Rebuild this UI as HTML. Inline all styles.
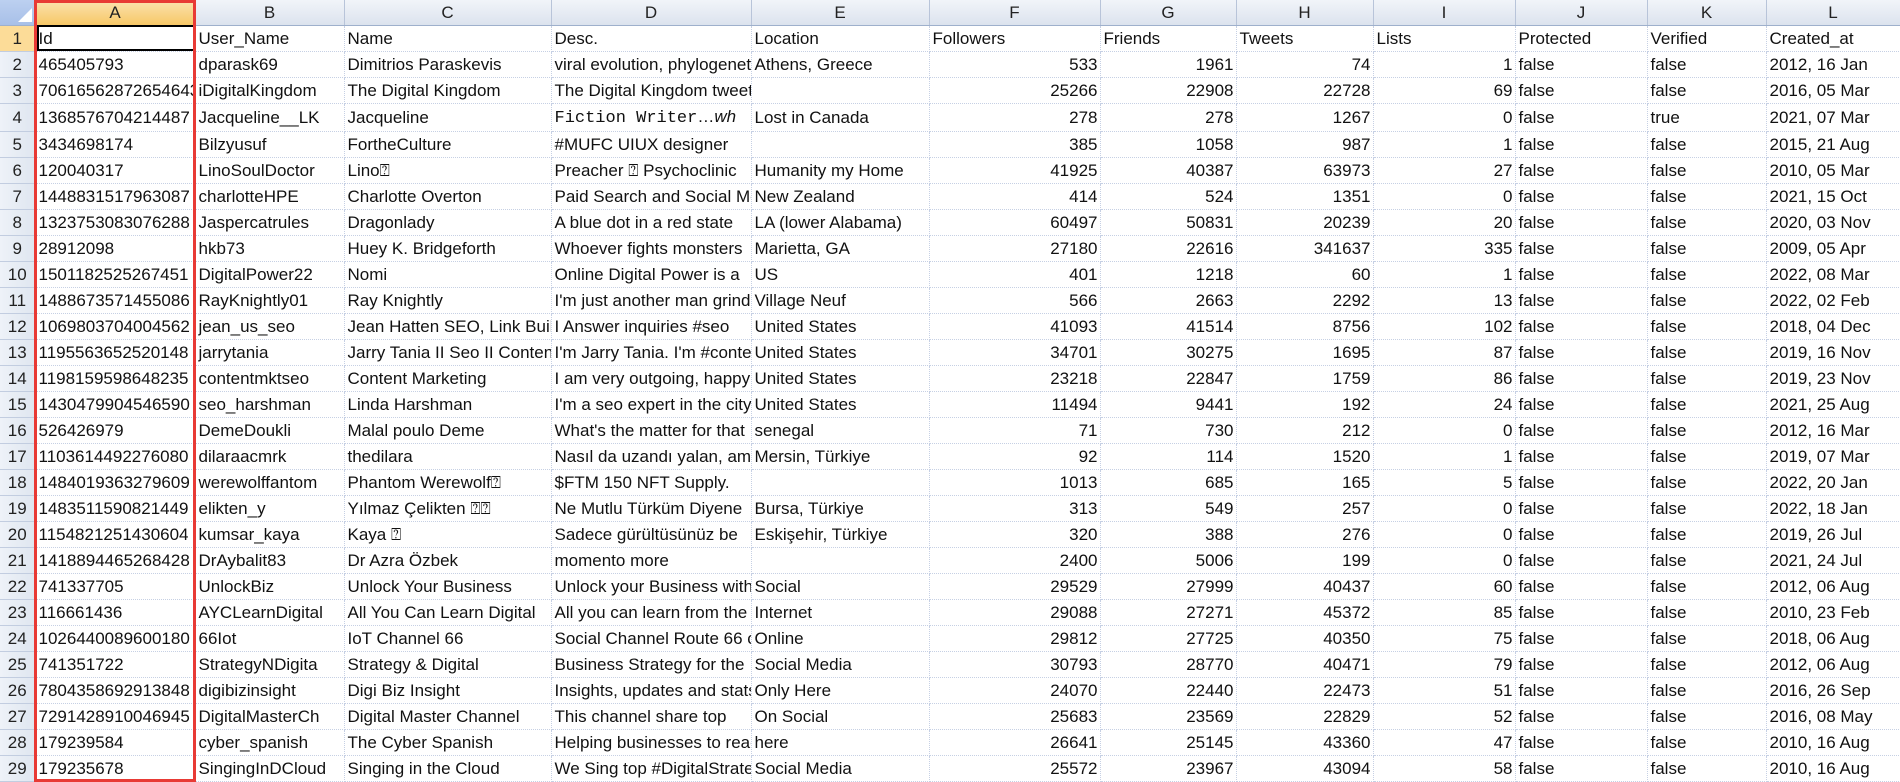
<!DOCTYPE html>
<html><head><meta charset="utf-8"><style>
html,body{margin:0;padding:0;width:1900px;height:782px;overflow:hidden;background:#fff}
table{border-collapse:collapse;table-layout:fixed;width:1900px;position:absolute;left:0;top:0;font-family:"Liberation Sans","DejaVu Sans",sans-serif;font-size:17px;color:#111}
td{height:25px;padding:0 0 0 3px;white-space:nowrap;overflow:hidden;border-right:1px dotted #c6d0e4;border-bottom:1px dotted #c6d0e4;line-height:25px;box-sizing:border-box}
tr.h td{height:25px;background:linear-gradient(#f1f4f9,#dce3ee);text-align:center;color:#222;border-right:1px solid #b8c4d9;border-bottom:1px solid #9eb0cc;padding:0}
tr.h td.sel{background:linear-gradient(#fbe3b1,#f7c867);}
td.rh{background:linear-gradient(90deg,#eef2f8,#dfe6f0);text-align:center;border-right:1px solid #9eb0cc;border-bottom:1px solid #c2cde0;padding:0;color:#222}
td.rh.sel{background:#fcdc98}
td.n{text-align:right;padding:0 2px 0 0}
.red{position:absolute;left:34px;top:0;width:156px;height:776px;border:3px solid #e83a35;box-sizing:content-box;pointer-events:none}
.a1{position:absolute;left:37px;top:25px;width:158px;height:26px;border:2px solid #000;box-sizing:border-box}
.corner{position:absolute;left:0;top:0;width:35px;height:25px;background:linear-gradient(#bcd0f0,#a8c0e8)}
.corner:after{content:"";position:absolute;right:3px;bottom:3px;border-left:14px solid transparent;border-bottom:14px solid #fff}
</style></head><body>
<table>
<colgroup><col style="width:35px"><col style="width:160px"><col style="width:149px"><col style="width:207px"><col style="width:200px"><col style="width:178px"><col style="width:171px"><col style="width:136px"><col style="width:137px"><col style="width:142px"><col style="width:132px"><col style="width:119px"><col style="width:134px"></colgroup>
<tr class="h"><td></td><td class="sel">A</td><td>B</td><td>C</td><td>D</td><td>E</td><td>F</td><td>G</td><td>H</td><td>I</td><td>J</td><td>K</td><td>L</td></tr>
<tr><td class="rh sel">1</td><td>Id</td><td>User_Name</td><td>Name</td><td>Desc.</td><td>Location</td><td>Followers</td><td>Friends</td><td>Tweets</td><td>Lists</td><td>Protected</td><td>Verified</td><td>Created_at</td></tr>
<tr><td class="rh">2</td><td>465405793</td><td>dparask69</td><td>Dimitrios Paraskevis</td><td>viral evolution, phylogenetics</td><td>Athens, Greece</td><td class="n">533</td><td class="n">1961</td><td class="n">74</td><td class="n">1</td><td>false</td><td>false</td><td>2012, 16 Jan</td></tr>
<tr><td class="rh">3</td><td>706165628726546432</td><td>iDigitalKingdom</td><td>The Digital Kingdom</td><td>The Digital Kingdom tweets</td><td></td><td class="n">25266</td><td class="n">22908</td><td class="n">22728</td><td class="n">69</td><td>false</td><td>false</td><td>2016, 05 Mar</td></tr>
<tr><td class="rh">4</td><td>1368576704214487</td><td>Jacqueline__LK</td><td>Jacqueline</td><td><span style="font-family:'Liberation Mono',monospace">Fiction Writer</span>…<i>wh</i></td><td>Lost in Canada</td><td class="n">278</td><td class="n">278</td><td class="n">1267</td><td class="n">0</td><td>false</td><td>true</td><td>2021, 07 Mar</td></tr>
<tr><td class="rh">5</td><td>3434698174</td><td>Bilzyusuf</td><td>FortheCulture</td><td>#MUFC UIUX designer</td><td></td><td class="n">385</td><td class="n">1058</td><td class="n">987</td><td class="n">1</td><td>false</td><td>false</td><td>2015, 21 Aug</td></tr>
<tr><td class="rh">6</td><td>120040317</td><td>LinoSoulDoctor</td><td>Lino⍰</td><td>Preacher ⍰ Psychoclinic</td><td>Humanity my Home</td><td class="n">41925</td><td class="n">40387</td><td class="n">63973</td><td class="n">27</td><td>false</td><td>false</td><td>2010, 05 Mar</td></tr>
<tr><td class="rh">7</td><td>1448831517963087</td><td>charlotteHPE</td><td>Charlotte Overton</td><td>Paid Search and Social Media</td><td>New Zealand</td><td class="n">414</td><td class="n">524</td><td class="n">1351</td><td class="n">0</td><td>false</td><td>false</td><td>2021, 15 Oct</td></tr>
<tr><td class="rh">8</td><td>1323753083076288</td><td>Jaspercatrules</td><td>Dragonlady</td><td>A blue dot in a red state</td><td>LA (lower Alabama)</td><td class="n">60497</td><td class="n">50831</td><td class="n">20239</td><td class="n">20</td><td>false</td><td>false</td><td>2020, 03 Nov</td></tr>
<tr><td class="rh">9</td><td>28912098</td><td>hkb73</td><td>Huey K. Bridgeforth</td><td>Whoever fights monsters</td><td>Marietta, GA</td><td class="n">27180</td><td class="n">22616</td><td class="n">341637</td><td class="n">335</td><td>false</td><td>false</td><td>2009, 05 Apr</td></tr>
<tr><td class="rh">10</td><td>1501182525267451</td><td>DigitalPower22</td><td>Nomi</td><td>Online Digital Power is a</td><td>US</td><td class="n">401</td><td class="n">1218</td><td class="n">60</td><td class="n">1</td><td>false</td><td>false</td><td>2022, 08 Mar</td></tr>
<tr><td class="rh">11</td><td>1488673571455086</td><td>RayKnightly01</td><td>Ray Knightly</td><td>I'm just another man grinding</td><td>Village Neuf</td><td class="n">566</td><td class="n">2663</td><td class="n">2292</td><td class="n">13</td><td>false</td><td>false</td><td>2022, 02 Feb</td></tr>
<tr><td class="rh">12</td><td>1069803704004562</td><td>jean_us_seo</td><td>Jean Hatten SEO, Link Builder</td><td>I Answer inquiries #seo</td><td>United States</td><td class="n">41093</td><td class="n">41514</td><td class="n">8756</td><td class="n">102</td><td>false</td><td>false</td><td>2018, 04 Dec</td></tr>
<tr><td class="rh">13</td><td>1195563652520148</td><td>jarrytania</td><td>Jarry Tania II Seo II Content</td><td>I'm Jarry Tania. I'm #content</td><td>United States</td><td class="n">34701</td><td class="n">30275</td><td class="n">1695</td><td class="n">87</td><td>false</td><td>false</td><td>2019, 16 Nov</td></tr>
<tr><td class="rh">14</td><td>1198159598648235</td><td>contentmktseo</td><td>Content Marketing</td><td>I am very outgoing, happy</td><td>United States</td><td class="n">23218</td><td class="n">22847</td><td class="n">1759</td><td class="n">86</td><td>false</td><td>false</td><td>2019, 23 Nov</td></tr>
<tr><td class="rh">15</td><td>1430479904546590</td><td>seo_harshman</td><td>Linda Harshman</td><td>I'm a seo expert in the city</td><td>United States</td><td class="n">11494</td><td class="n">9441</td><td class="n">192</td><td class="n">24</td><td>false</td><td>false</td><td>2021, 25 Aug</td></tr>
<tr><td class="rh">16</td><td>526426979</td><td>DemeDoukli</td><td>Malal poulo Deme</td><td>What's the matter for that</td><td>senegal</td><td class="n">71</td><td class="n">730</td><td class="n">212</td><td class="n">0</td><td>false</td><td>false</td><td>2012, 16 Mar</td></tr>
<tr><td class="rh">17</td><td>1103614492276080</td><td>dilaraacmrk</td><td>thedilara</td><td>Nasıl da uzandı yalan, ama</td><td>Mersin, Türkiye</td><td class="n">92</td><td class="n">114</td><td class="n">1520</td><td class="n">1</td><td>false</td><td>false</td><td>2019, 07 Mar</td></tr>
<tr><td class="rh">18</td><td>1484019363279609</td><td>werewolffantom</td><td>Phantom Werewolf⍰</td><td>$FTM  150 NFT Supply.</td><td></td><td class="n">1013</td><td class="n">685</td><td class="n">165</td><td class="n">5</td><td>false</td><td>false</td><td>2022, 20 Jan</td></tr>
<tr><td class="rh">19</td><td>1483511590821449</td><td>elikten_y</td><td>Yılmaz Çelikten ⍰⍰</td><td>Ne Mutlu Türküm Diyene</td><td>Bursa, Türkiye</td><td class="n">313</td><td class="n">549</td><td class="n">257</td><td class="n">0</td><td>false</td><td>false</td><td>2022, 18 Jan</td></tr>
<tr><td class="rh">20</td><td>1154821251430604</td><td>kumsar_kaya</td><td>Kaya ⍰</td><td>Sadece gürültüsünüz be</td><td>Eskişehir, Türkiye</td><td class="n">320</td><td class="n">388</td><td class="n">276</td><td class="n">0</td><td>false</td><td>false</td><td>2019, 26 Jul</td></tr>
<tr><td class="rh">21</td><td>1418894465268428</td><td>DrAybalit83</td><td>Dr Azra Özbek</td><td>momento more</td><td></td><td class="n">2400</td><td class="n">5006</td><td class="n">199</td><td class="n">0</td><td>false</td><td>false</td><td>2021, 24 Jul</td></tr>
<tr><td class="rh">22</td><td>741337705</td><td>UnlockBiz</td><td>Unlock Your Business</td><td>Unlock your Business with</td><td>Social</td><td class="n">29529</td><td class="n">27999</td><td class="n">40437</td><td class="n">60</td><td>false</td><td>false</td><td>2012, 06 Aug</td></tr>
<tr><td class="rh">23</td><td>116661436</td><td>AYCLearnDigital</td><td>All You Can Learn Digital</td><td>All you can learn from the</td><td>Internet</td><td class="n">29088</td><td class="n">27271</td><td class="n">45372</td><td class="n">85</td><td>false</td><td>false</td><td>2010, 23 Feb</td></tr>
<tr><td class="rh">24</td><td>1026440089600180</td><td>66Iot</td><td>IoT Channel 66</td><td>Social Channel Route 66 of</td><td>Online</td><td class="n">29812</td><td class="n">27725</td><td class="n">40350</td><td class="n">75</td><td>false</td><td>false</td><td>2018, 06 Aug</td></tr>
<tr><td class="rh">25</td><td>741351722</td><td>StrategyNDigita</td><td>Strategy &amp; Digital</td><td>Business Strategy for the</td><td>Social Media</td><td class="n">30793</td><td class="n">28770</td><td class="n">40471</td><td class="n">79</td><td>false</td><td>false</td><td>2012, 06 Aug</td></tr>
<tr><td class="rh">26</td><td>7804358692913848</td><td>digibizinsight</td><td>Digi Biz Insight</td><td>Insights, updates and stats</td><td>Only Here</td><td class="n">24070</td><td class="n">22440</td><td class="n">22473</td><td class="n">51</td><td>false</td><td>false</td><td>2016, 26 Sep</td></tr>
<tr><td class="rh">27</td><td>7291428910046945</td><td>DigitalMasterCh</td><td>Digital Master Channel</td><td>This channel share top</td><td>On Social</td><td class="n">25683</td><td class="n">23569</td><td class="n">22829</td><td class="n">52</td><td>false</td><td>false</td><td>2016, 08 May</td></tr>
<tr><td class="rh">28</td><td>179239584</td><td>cyber_spanish</td><td>The Cyber Spanish</td><td>Helping businesses to reach</td><td>here</td><td class="n">26641</td><td class="n">25145</td><td class="n">43360</td><td class="n">47</td><td>false</td><td>false</td><td>2010, 16 Aug</td></tr>
<tr><td class="rh">29</td><td>179235678</td><td>SingingInDCloud</td><td>Singing in the Cloud</td><td>We Sing top #DigitalStrategy</td><td>Social Media</td><td class="n">25572</td><td class="n">23967</td><td class="n">43094</td><td class="n">58</td><td>false</td><td>false</td><td>2010, 16 Aug</td></tr>
</table>
<div class="corner"></div>
<div class="a1"></div>
<div class="red"></div>
</body></html>
